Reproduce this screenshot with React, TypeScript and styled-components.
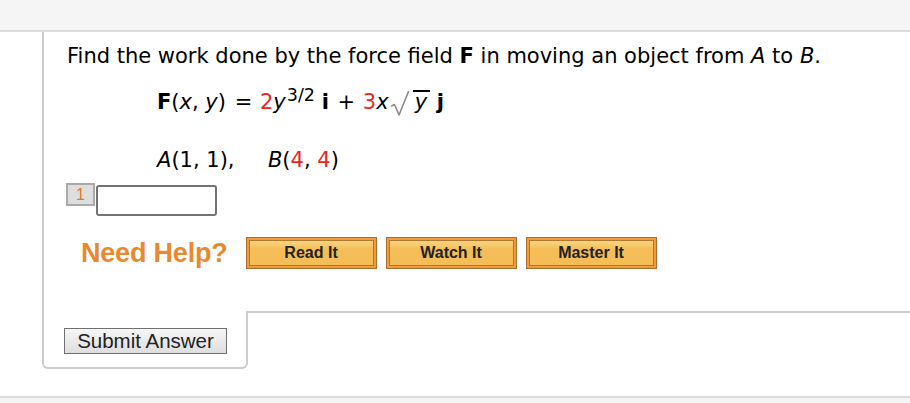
import React from "react";
import styled, { createGlobalStyle } from "styled-components";

const Global = createGlobalStyle`
  html, body { margin: 0; padding: 0; background: #fff; }
  body { font-family: "DejaVu Sans", Verdana, sans-serif; color: #000; }
`;

const Page = styled.div`
  width: 910px;
  height: 403px;
  display: flex;
  flex-direction: column;
  overflow: hidden;
`;

const TopBand = styled.div`
  height: 30px;
  flex: none;
  background: #f5f5f5;
  border-bottom: 2px solid #dcdcdc;
`;

const Main = styled.div`
  padding-left: 42px;
  height: 364px;
  flex: none;
`;

const Question = styled.div`
  border-left: 2px solid #cccccc;
  padding: 11px 0 42px 23px;
`;

const Prompt = styled.p`
  margin: 0;
  font-size: 21px;
  line-height: 26px;
  white-space: nowrap;
`;

const MathLine = styled.div<{ $gap: number }>`
  margin-top: ${(p) => p.$gap}px;
  padding-left: 90px;
  font-size: 21px;
  line-height: 26px;
  height: 26px;
  white-space: nowrap;
`;

const Red = styled.span`
  color: #e8281d;
`;

const Bold = styled.b`
  font-weight: bold;
`;

const Op = styled.span`
  margin: 0 1px 0 2px;
`;

const Sup = styled.sup`
  font-size: 17.5px;
  vertical-align: 8px;
  line-height: 0;
  margin-left: 1px;
`;

const RadicalSvg = styled.svg`
  width: 20px;
  height: 27px;
  vertical-align: -8px;
  margin-left: 1px;
`;

const Radicand = styled.span`
  display: inline-block;
  border-top: 2px solid #000;
  line-height: 21px;
  padding: 0 3px 0 2px;
  margin-left: 3px;
`;

const AnswerRow = styled.div`
  margin-top: 10px;
  margin-left: -1px;
  display: flex;
  align-items: flex-start;
  gap: 1px;
`;

const Num = styled.span`
  width: 25px;
  height: 19px;
  background: #dedede;
  border: 2px solid #aaaaaa;
  color: #e07a22;
  font-family: "Liberation Sans", Arial, sans-serif;
  font-size: 16px;
  line-height: 19px;
  text-align: center;
`;

const Input = styled.div`
  width: 117px;
  height: 27px;
  border: 2px solid #737373;
  border-radius: 3px;
  margin-top: 2px;
  background: #fff;
`;

const HelpRow = styled.div`
  margin-top: 21px;
  margin-left: 14px;
  display: flex;
  align-items: center;
  gap: 9px;
`;

const HelpLabel = styled.span`
  font-family: "Liberation Sans", Arial, sans-serif;
  font-weight: bold;
  font-size: 27px;
  color: #e8892e;
  margin-right: 9px;
  letter-spacing: -0.2px;
`;

const HelpButton = styled.span`
  width: 131px;
  height: 32px;
  box-sizing: border-box;
  border: 1px solid #a8702f;
  background: #f29a3c;
  padding: 2px;
  display: flex;
`;

const HelpInner = styled.span`
  flex: 1;
  border: 1px solid #b5762e;
  background: linear-gradient(#f9d680 0%, #f4bd57 35%, #f4bd57 100%);
  font-family: "Liberation Sans", Arial, sans-serif;
  font-weight: bold;
  font-size: 16px;
  color: #222;
  display: flex;
  align-items: center;
  justify-content: center;
`;

const BottomRow = styled.div`
  display: flex;
  align-items: flex-start;
`;

const SubmitBox = styled.div`
  width: 206px;
  box-sizing: border-box;
  border-left: 2px solid #cccccc;
  border-right: 2px solid #cccccc;
  border-bottom: 2px solid #cccccc;
  border-radius: 0 0 6px 6px;
  padding: 17px 0 13px 20px;
`;

const Filler = styled.div`
  flex: 1;
  border-top: 2px solid #cccccc;
`;

const SubmitButton = styled.button`
  display: block;
  width: 163px;
  height: 26px;
  margin: 0;
  padding: 0;
  border: 1px solid #707070;
  background: linear-gradient(#f6f6f6, #dedede);
  font-family: "Liberation Sans", Arial, sans-serif;
  font-size: 20.5px;
  line-height: 24px;
  color: #222;
`;

const Footer = styled.div`
  flex: 1;
  background: #f5f5f5;
  border-top: 2px solid #dcdcdc;
`;

export default function App() {
  return (
    <Page>
      <Global />
      <TopBand />
      <Main>
        <Question>
          <Prompt>
            Find the work done by the force field <Bold>F</Bold> in moving an object from <i>A</i> to <i>B</i>.
          </Prompt>
          <MathLine $gap={20}>
            <Bold>F</Bold>(<i>x</i>, <i>y</i>) <Op>=</Op> <Red>2</Red><i>y</i>
            <Sup>3/2</Sup> <Bold>i</Bold> <Op>+</Op> <Red>3</Red><i>x</i>
            <RadicalSvg viewBox="0 0 20 27" aria-hidden="true">
              <path d="M1.5 16 L4.5 14.5 L9 25 L18.5 1.5" fill="none" stroke="#8a8a8a" strokeWidth="1.6" strokeLinejoin="round" strokeLinecap="round" />
            </RadicalSvg>
            <Radicand><i>y</i></Radicand> <Bold>j</Bold>
          </MathLine>
          <MathLine $gap={32}>
            <i>A</i>(1, 1),&nbsp;&nbsp;&nbsp;&nbsp; <i>B</i>(<Red>4</Red>, <Red>4</Red>)
          </MathLine>
          <AnswerRow>
            <Num>1</Num>
            <Input />
          </AnswerRow>
          <HelpRow>
            <HelpLabel>Need Help?</HelpLabel>
            <HelpButton><HelpInner>Read It</HelpInner></HelpButton>
            <HelpButton><HelpInner>Watch It</HelpInner></HelpButton>
            <HelpButton><HelpInner>Master It</HelpInner></HelpButton>
          </HelpRow>
        </Question>
        <BottomRow>
          <SubmitBox>
            <SubmitButton>Submit Answer</SubmitButton>
          </SubmitBox>
          <Filler />
        </BottomRow>
      </Main>
      <Footer />
    </Page>
  );
}
